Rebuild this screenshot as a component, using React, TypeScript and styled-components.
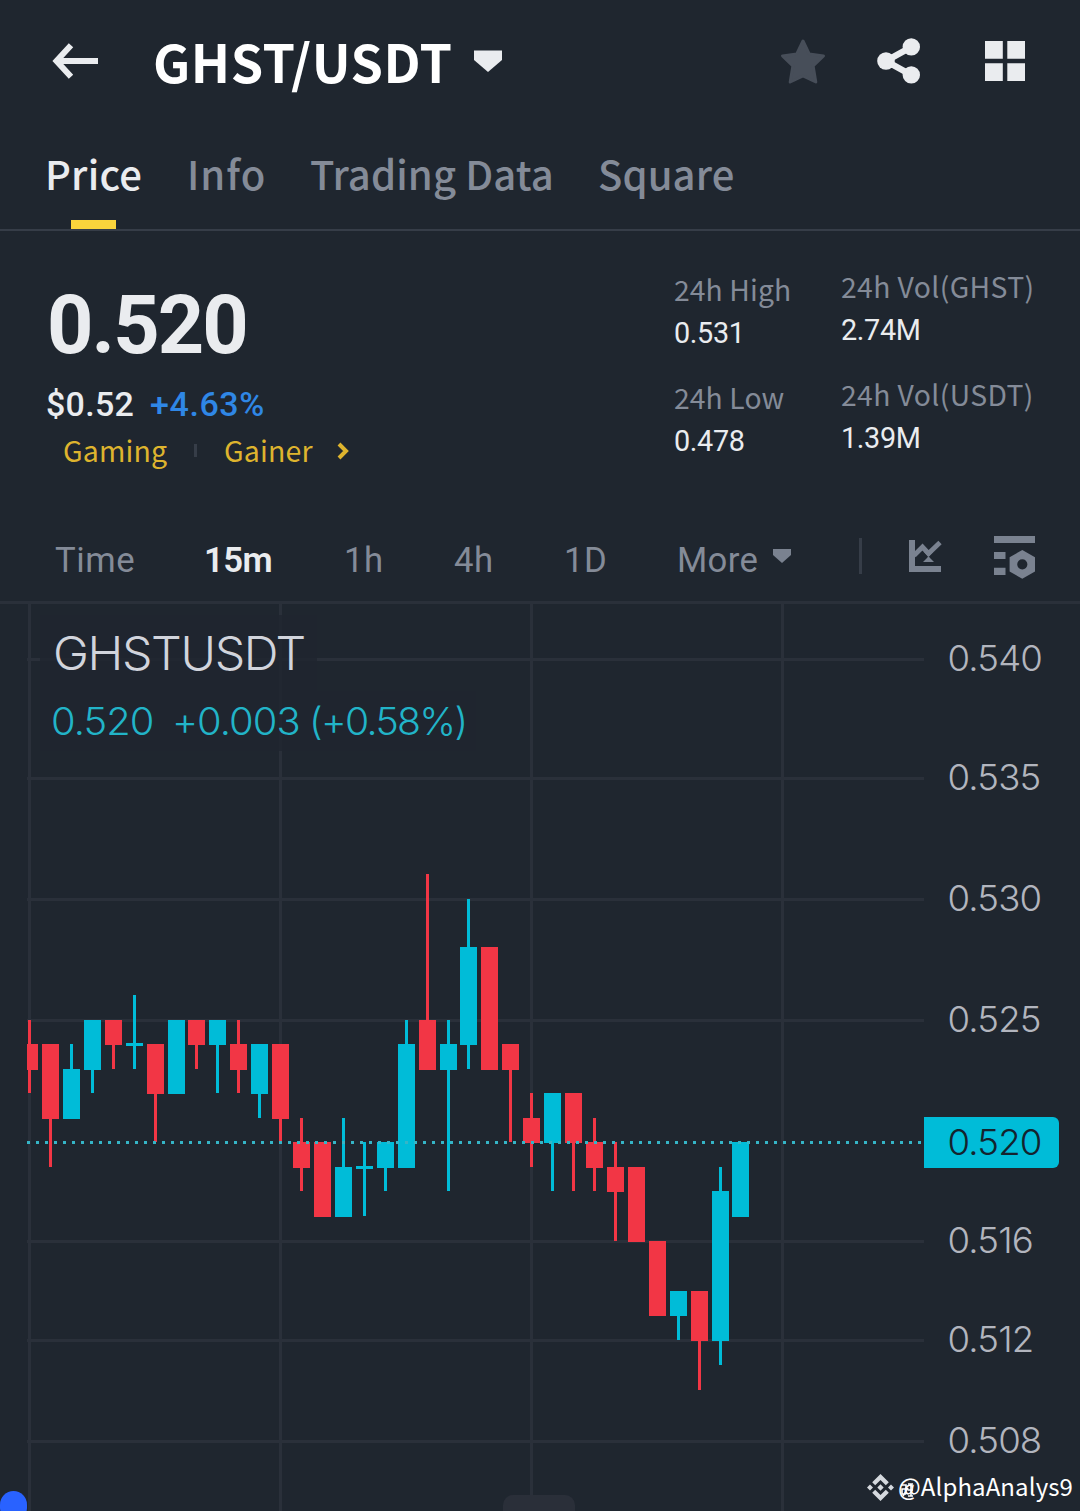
import React from 'react';
import styled, { createGlobalStyle } from 'styled-components';

const color = {
  bg: '#1f262f',
  text: '#eaecef',
  muted: '#848b98',
  icon: '#7a8290',
  line: '#363d48',
  grid: '#2a303a',
  yellow: '#fad43c',
  tag: '#deb42e',
  blue: '#2f87e6',
  up: '#00bcd8',
  down: '#f23645',
};

const sans = '"Noto Sans CJK SC", "Noto Sans", sans-serif';
const din = 'Roboto, "Liberation Sans", sans-serif';
const chartFont = 'Inter, "Liberation Sans", sans-serif';

const GlobalStyle = createGlobalStyle`
  body { margin: 0; background: ${color.bg}; }
  * { box-sizing: border-box; }
`;

const Screen = styled.main`
  position: relative;
  display: flex;
  flex-direction: column;
  width: 1080px;
  height: 1511px;
  overflow: hidden;
  background: ${color.bg};
  color: ${color.text};
  font-family: ${sans};
  white-space: pre;
`;

const Header = styled.header`
  display: flex;
  align-items: center;
  height: 122px;
  padding: 0 55px 0 52px;
`;

const Pair = styled.h1`
  margin: 0 23px 0 55px;
  width: 298px;
  font-size: 52px;
  line-height: 60px;
  font-weight: 600;
  letter-spacing: 0.5px;
  color: #fff;
`;

const HeaderActions = styled.div`
  display: flex;
  align-items: center;
  margin-left: auto;
`;

const Icon = styled.svg<{ $gap?: number }>`
  display: block;
  flex: none;
  margin-left: ${(p) => p.$gap ?? 0}px;
`;

const Tabs = styled.nav`
  display: flex;
  height: 109px;
  padding-left: 45px;
  border-bottom: 2px solid ${color.line};
`;

const Tab = styled.div<{ $width: number; $spacing: number; $active?: boolean }>`
  display: flex;
  flex-direction: column;
  justify-content: space-between;
  width: ${(p) => p.$width}px;
  padding-top: 20px;
  font-size: 40px;
  line-height: 62px;
  font-weight: 500;
  letter-spacing: ${(p) => p.$spacing}px;
  color: ${(p) => (p.$active ? color.text : color.muted)};
`;

const Underline = styled.span`
  width: 45px;
  height: 9px;
  margin-left: 26px;
  background: ${color.yellow};
`;

const Summary = styled.section`
  display: flex;
  height: 283px;
  padding: 0 20px 0 47px;
`;

const PriceBlock = styled.div`
  width: 627px;
  padding-top: 45px;
`;

const LastPrice = styled.div`
  font-family: ${din};
  font-size: 81px;
  line-height: 100px;
  font-weight: 700;
  letter-spacing: -1.900px;
`;

const SubPrice = styled.div`
  display: flex;
  height: 59px;
  margin-left: -1px;
  font-family: ${din};
  font-size: 34px;
  line-height: 56px;
  font-weight: 500;
`;

const Fiat = styled.span`
  width: 104px;
  letter-spacing: 0.300px;
`;

const Change = styled.span`
  color: ${color.blue};
  letter-spacing: 0.600px;
`;

const Tags = styled.div`
  display: flex;
  align-items: center;
  height: 30px;
  padding-left: 16px;
  font-size: 28.5px;
  line-height: 30px;
  letter-spacing: 0.15px;
  color: ${color.tag};
`;

const Tag = styled.span<{ $width: number }>`
  width: ${(p) => p.$width}px;
`;

const TagDivider = styled.span`
  width: 3px;
  height: 13px;
  margin-right: 27px;
  background: ${color.line};
`;

const StatColumn = styled.div<{ $top: number; $width: number; $spacing: number }>`
  display: flex;
  flex-direction: column;
  gap: 24px;
  width: ${(p) => p.$width}px;
  padding-top: ${(p) => p.$top}px;
  letter-spacing: ${(p) => p.$spacing}px;
`;

const Stat = styled.div`
  height: 84px;
`;

const StatLabel = styled.div`
  font-size: 28.3px;
  line-height: 40px;
  color: ${color.muted};
`;

const StatValue = styled.div`
  font-family: ${din};
  font-size: 28.8px;
  line-height: 44px;
  padding-top: 2px;
  font-weight: 450;
  letter-spacing: -0.350px;
`;

const Intervals = styled.nav`
  display: flex;
  align-items: center;
  height: 87px;
  padding: 0 0 0 55px;
`;

const Interval = styled.span<{ $width: number; $active?: boolean; $spacing?: number }>`
  width: ${(p) => p.$width}px;
  font-family: ${din};
  font-size: 34.7px;
  line-height: 48px;
  padding-top: 4px;
  font-weight: ${(p) => (p.$active ? 600 : 400)};
  letter-spacing: ${(p) => p.$spacing ?? 0.6}px;
  color: ${(p) => (p.$active ? color.text : color.muted)};
`;

const Divider = styled.span`
  width: 3px;
  height: 36px;
  margin: 0 0 4px 68px;
  background: ${color.line};
`;

const ChartArea = styled.section`
  position: relative;
  height: 910px;
`;

const ChartSvg = styled.svg`
  display: block;
  font-family: ${chartFont};
  font-optical-sizing: none;
`;

const AxisLabel = styled.text`
  font-size: 35px;
  font-weight: 300;
  letter-spacing: -0.8px;
  transform-box: fill-box;
  transform-origin: left center;
  transform: scaleX(1.045);
`;

const Legend = styled.div`
  position: absolute;
  left: 40px;
  top: 14px;
  display: flex;
  flex-direction: column;
  align-items: flex-start;
  font-family: ${chartFont};
  font-optical-sizing: none;
  font-weight: 300;
`;

const Symbol = styled.div`
  width: 277px;
  padding-left: 13px;
  background: rgba(31, 38, 47, 0.8);
  font-size: 47px;
  line-height: 76px;
  letter-spacing: -1.3px;
  color: #d1d4dc;
`;

const Quote = styled.div`
  display: flex;
  width: 436px;
  padding-left: 11px;
  background: rgba(31, 38, 47, 0.8);
  font-size: 38px;
  line-height: 60px;
  color: #22b4c8;
`;

const Wide = styled.span<{ $stretch: number }>`
  display: inline-block;
  transform: scaleX(${(p) => p.$stretch});
  transform-origin: left center;
`;

const QuoteItem = styled.span<{ $width: number; $spacing: number }>`
  width: ${(p) => p.$width}px;
  letter-spacing: ${(p) => p.$spacing}px;
`;

const BlueDot = styled.span`
  position: absolute;
  left: 0;
  bottom: -10px;
  width: 27px;
  height: 30px;
  border-radius: 14px;
  background: #2962ff;
`;

const Grip = styled.span`
  position: absolute;
  left: 503px;
  bottom: 0;
  width: 72px;
  height: 16px;
  border-radius: 10px 10px 0 0;
  background: #2a2f39;
`;

const Watermark = styled.div`
  position: absolute;
  right: 6px;
  bottom: 6px;
  display: flex;
  align-items: center;
  width: 207px;
  height: 36px;
`;

const Author = styled.span`
  margin: -2px 0 0 4px;
  font-size: 24px;
  line-height: 36px;
  letter-spacing: 0.1px;
  color: #fff;
`;

const Smudge = styled.svg`
  position: absolute;
  left: 33px;
  top: 13px;
`;

type Candle = { x: number; top: number; bottom: number; high?: number; low?: number; up?: boolean; w?: number };

const candles: Candle[] = [
  { x: 27, w: 11, top: 1044, bottom: 1070, high: 1020, low: 1093 },
  { x: 42, top: 1044, bottom: 1119, low: 1167 },
  { x: 63, top: 1069, bottom: 1119, high: 1044, up: true },
  { x: 84, top: 1020, bottom: 1070, low: 1093, up: true },
  { x: 105, top: 1020, bottom: 1045, low: 1069 },
  { x: 126, top: 1043, bottom: 1046, high: 995, low: 1069, up: true },
  { x: 147, top: 1044, bottom: 1094, low: 1142 },
  { x: 168, top: 1020, bottom: 1094, up: true },
  { x: 188, top: 1020, bottom: 1045, low: 1069 },
  { x: 209, top: 1020, bottom: 1045, low: 1093, up: true },
  { x: 230, top: 1044, bottom: 1070, high: 1020, low: 1093 },
  { x: 251, top: 1044, bottom: 1094, low: 1118, up: true },
  { x: 272, top: 1044, bottom: 1119, low: 1142 },
  { x: 293, top: 1142, bottom: 1168, high: 1118, low: 1191 },
  { x: 314, top: 1142, bottom: 1217 },
  { x: 335, top: 1167, bottom: 1217, high: 1118, up: true },
  { x: 356, top: 1166, bottom: 1169, high: 1142, low: 1216, up: true },
  { x: 377, top: 1142, bottom: 1168, low: 1191, up: true },
  { x: 398, top: 1044, bottom: 1168, high: 1020, up: true },
  { x: 419, top: 1020, bottom: 1070, high: 874 },
  { x: 440, top: 1044, bottom: 1070, high: 1020, low: 1191, up: true },
  { x: 460, top: 947, bottom: 1045, high: 899, low: 1069, up: true },
  { x: 481, top: 947, bottom: 1070 },
  { x: 502, top: 1044, bottom: 1070, low: 1142 },
  { x: 523, top: 1118, bottom: 1143, high: 1093, low: 1167 },
  { x: 544, top: 1093, bottom: 1143, low: 1191, up: true },
  { x: 565, top: 1093, bottom: 1143, low: 1191 },
  { x: 586, top: 1142, bottom: 1168, high: 1118, low: 1191 },
  { x: 607, top: 1167, bottom: 1192, high: 1142, low: 1241 },
  { x: 628, top: 1167, bottom: 1242 },
  { x: 649, top: 1241, bottom: 1316 },
  { x: 670, top: 1291, bottom: 1316, low: 1340, up: true },
  { x: 691, top: 1291, bottom: 1341, low: 1390 },
  { x: 712, top: 1191, bottom: 1341, high: 1167, low: 1365, up: true },
  { x: 732, top: 1142, bottom: 1217, up: true },
];

const priceLines: [string, number][] = [
  ['0.540', 658],
  ['0.535', 777],
  ['0.530', 898],
  ['0.525', 1019],
  ['0.516', 1240],
  ['0.512', 1339],
  ['0.508', 1440],
];

const timeLines = [28, 279, 530, 781];

function CandleChart() {
  return (
    <ChartSvg width="1080" height="910" viewBox="0 601 1080 910">
      <rect x="0" y="601" width="1080" height="3" fill={color.grid} />
      {timeLines.map((x) => (
        <rect key={x} x={x} y="601" width="3" height="910" fill={color.grid} />
      ))}
      {priceLines.map(([label, y]) => (
        <g key={label}>
          <rect x="27" y={y} width="897" height="3" fill={color.grid} />
          <AxisLabel x="947.5" y={y + 13} fill="#b2b5be">
            {label}
          </AxisLabel>
        </g>
      ))}
      {candles.map((c) => {
        const fill = c.up ? color.up : color.down;
        const high = c.high ?? c.top;
        const low = c.low ?? c.bottom;
        return (
          <g key={c.x} fill={fill}>
            <rect x={c.w ? 28 : c.x + 7} y={high} width="3" height={low - high} />
            <rect x={c.x} y={c.top} width={c.w ?? 17} height={c.bottom - c.top} />
          </g>
        );
      })}
      <line x1="27" y1="1142.5" x2="924" y2="1142.5" stroke="#35b5c7" strokeWidth="3" strokeDasharray="3 6" />
      <path d="M924 1117h129a6 6 0 0 1 6 6v39a6 6 0 0 1-6 6h-129z" fill={color.up} />
      <AxisLabel x="947.5" y="1155" fill="#14232e">
        0.520
      </AxisLabel>
    </ChartSvg>
  );
}

export default function App() {
  return (
    <Screen>
      <GlobalStyle />
      <Header>
        <Icon width="46" height="36" viewBox="0 0 46 36" fill="none" stroke={color.text} strokeWidth="6">
          <path d="M46 18H5M19 2.200L4.500 18l14.500 15.800" />
        </Icon>
        <Pair>GHST/USDT</Pair>
        <Icon width="28" height="22" viewBox="0 0 28 22" fill={color.text}>
          <path d="M0 .5h28v9.500L14 22 0 10z" />
        </Icon>
        <HeaderActions>
          <Icon width="46" height="48" viewBox="0 0 46 48" fill="#474e59" stroke="#474e59" strokeWidth="3" strokeLinejoin="round">
            <path d="M23 4l6.200 12.900 14.300 2-10.400 9.900 2.700 16.200L23 39 10.200 45l2.700-16.200L2.500 18.900l14.300-2z" />
          </Icon>
          <Icon $gap={51} width="43" height="46" viewBox="0 0 43 46" fill={color.text} stroke={color.text}>
            <path d="M34.300 9L9 23l25.300 14" fill="none" strokeWidth="6.500" />
            <g stroke="none">
              <circle cx="9" cy="23" r="8.800" />
              <circle cx="34.300" cy="8.900" r="8.700" />
              <circle cx="34.300" cy="36.900" r="8.700" />
            </g>
          </Icon>
          <Icon $gap={65} width="40" height="40" viewBox="0 0 40 40" fill={color.text}>
            <path d="M0 0h17.800v17.800H0zM22.300 0H40v17.800H22.300zM0 22.300h17.800V40H0zM22.300 22.300H40V40H22.300z" />
          </Icon>
        </HeaderActions>
      </Header>

      <Tabs>
        <Tab $width={142} $spacing={0.2} $active>
          Price
          <Underline />
        </Tab>
        <Tab $width={123} $spacing={1}>Info</Tab>
        <Tab $width={288} $spacing={0.1}>Trading Data</Tab>
        <Tab $width={150} $spacing={0.1}>Square</Tab>
      </Tabs>

      <Summary>
        <PriceBlock>
          <LastPrice>0.520</LastPrice>
          <SubPrice>
            <Fiat>$0.52</Fiat>
            <Change>+4.63%</Change>
          </SubPrice>
          <Tags>
            <Tag $width={131}>Gaming</Tag>
            <TagDivider />
            <Tag $width={113}>Gainer</Tag>
            <Icon width="12" height="20" viewBox="0 -2 12 20" fill="none" stroke={color.tag} strokeWidth="4">
              <path d="M2 2l7 7-7 7" />
            </Icon>
          </Tags>
        </PriceBlock>
        <StatColumn $top={38} $width={167} $spacing={0.1}>
          <Stat>
            <StatLabel>24h High</StatLabel>
            <StatValue>0.531</StatValue>
          </Stat>
          <Stat>
            <StatLabel>24h Low</StatLabel>
            <StatValue>0.478</StatValue>
          </Stat>
        </StatColumn>
        <StatColumn $top={35} $width={210} $spacing={0.4}>
          <Stat>
            <StatLabel>24h Vol(GHST)</StatLabel>
            <StatValue>2.74M</StatValue>
          </Stat>
          <Stat>
            <StatLabel>24h Vol(USDT)</StatLabel>
            <StatValue>1.39M</StatValue>
          </Stat>
        </StatColumn>
      </Summary>

      <Intervals>
        <Interval $width={149}>Time</Interval>
        <Interval $width={140} $active $spacing={-0.6}>15m</Interval>
        <Interval $width={110} $spacing={0.5}>1h</Interval>
        <Interval $width={110} $spacing={0.5}>4h</Interval>
        <Interval $width={113} $spacing={0.5}>1D</Interval>
        <Interval $width={96} $spacing={0.3}>More</Interval>
        <Icon width="18" height="22" viewBox="0 0 18 22" fill={color.icon}>
          <path d="M0 2h18v6L9 16 0 8z" />
        </Icon>
        <Divider />
        <Icon $gap={47} width="33" height="36" viewBox="0 0 33 36" fill={color.icon}>
          <path d="M0 0h6v26h26v6H0z" />
          <path d="M5 15.500l8.500-8.500 6 6.500L31 2.500" fill="none" stroke={color.icon} strokeWidth="4.800" />
          <path d="M14 22h11l-4-4-1.500-2-1.500 2zM15 12h9l-4.500 5z" />
        </Icon>
        <Icon $gap={51.500} width="41" height="43" viewBox="0 0 41 43" fill={color.icon}>
          <path d="M0 0h41v7H0zM0 16h11.500v7H0zM0 31.700h11.500V39H0z" />
          <path
            fillRule="evenodd"
            d="M28.300 14L41 21.200v14.400L28.300 42.700 15.600 35.600V21.200zM28.300 23.200a5.100 5.100 0 1 0 0 10.200 5.100 5.100 0 0 0 0-10.200z"
          />
        </Icon>
      </Intervals>

      <ChartArea>
        <CandleChart />
        <Legend>
          <Symbol>
            <Wide $stretch={1.027}>GHSTUSDT</Wide>
          </Symbol>
          <Quote>
            <QuoteItem $width={121} $spacing={-0.9}>
              <Wide $stretch={1.05}>0.520</Wide>
            </QuoteItem>
            <QuoteItem $width={137} $spacing={-0.9}>
              <Wide $stretch={1.05}>+0.003</Wide>
            </QuoteItem>
            <QuoteItem $width={160} $spacing={-1.6}>
              <Wide $stretch={1.032}>(+0.58%)</Wide>
            </QuoteItem>
          </Quote>
        </Legend>
        <BlueDot />
        <Grip />
        <Watermark>
          <Icon width="27" height="27" viewBox="0 0 27 27" fill="#d5d9de">
            <path d="M13.500 0l8.300 8.300-3 3-5.300-5.300-5.300 5.300-3-3zM13.500 27l8.300-8.300-3-3-5.300 5.300-5.300-5.300-3 3zM3 10.500l3 3-3 3-3-3zM24 10.500l3 3-3 3-3-3zM13.500 10.300l3.200 3.200-3.200 3.200-3.200-3.200z" />
          </Icon>
          <Author>@AlphaAnalys9</Author>
          <Smudge width="14" height="17" viewBox="0 0 14 17" fill="none" stroke="#fff" strokeWidth="1.600">
            <path d="M1 3h5v4H2v5h4M8 2h5M11 2v12M8 14h5M3 14l5-8M8 8h5" />
          </Smudge>
        </Watermark>
      </ChartArea>
    </Screen>
  );
}
